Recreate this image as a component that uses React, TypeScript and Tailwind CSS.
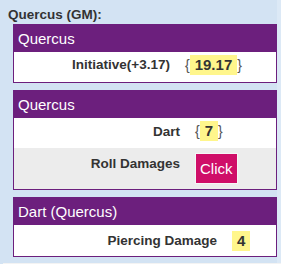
import React from "react"

const font = { fontFamily: '"Liberation Sans", Arial, sans-serif' }

function Card({ title, children }: { title: string; children: React.ReactNode }) {
  return (
    <div className="ml-[13px] w-[264px] border border-[#6c1f7d] bg-white">
      <div className="h-[27px] bg-[#6c1f7d] pl-[4px] text-[15px] leading-[27px] text-white">{title}</div>
      {children}
    </div>
  )
}

function Val({ v }: { v: string }) {
  return (
    <span className="bg-[#fff68c] px-[5px] text-[15px] font-bold leading-[20px] text-[#333]">{v}</span>
  )
}

function Brace({ children }: { children: string }) {
  return <span className="text-[14px] font-normal leading-[20px] text-[#555]">{children}</span>
}

export default function App() {
  return (
    <div className="h-[264px] w-[281px] overflow-hidden bg-[#dce9f6]" style={font}>
      <div className="h-full w-[277px] bg-[#d3e3f3] pt-[7px]">
        <div className="pl-[8px] text-[13.5px] font-bold leading-[16px] text-[#333]">Quercus (GM):</div>

        <div className="mt-[1px]">
          <Card title="Quercus">
            <div className="flex h-[30px] items-start pt-[3px]">
              <div className="flex-1 pr-[15px] text-right text-[13.5px] font-bold leading-[20px] text-[#333]">
                Initiative(+3.17)
              </div>
              <div className="flex w-[91px] items-start">
                <Brace>{"{"}</Brace>
                <Val v="19.17" />
                <Brace>{"}"}</Brace>
              </div>
            </div>
          </Card>
        </div>

        <div className="mt-[7px]">
          <Card title="Quercus">
            <div className="flex h-[30px] items-start pt-[3px]">
              <div className="flex-1 pr-[15px] pt-[1px] text-right text-[13.5px] font-bold leading-[20px] text-[#333]">
                Dart
              </div>
              <div className="flex w-[81px] items-start">
                <Brace>{"{"}</Brace>
                <Val v="7" />
                <Brace>{"}"}</Brace>
              </div>
            </div>
            <div className="flex h-[41px] items-start bg-[#ececec] pt-[5px]">
              <div className="flex-1 pr-[15px] pt-[1px] text-right text-[13.5px] font-bold leading-[20px] text-[#333]">
                Roll Damages
              </div>
              <div className="w-[81px]">
                <button className="h-[31px] border border-[#f6f6f6] bg-[#cf0e68] px-[4px] text-[15px] leading-[29px] text-white">
                  Click
                </button>
              </div>
            </div>
          </Card>
        </div>

        <div className="mt-[7px]">
          <Card title="Dart (Quercus)">
            <div className="flex h-[31px] items-start pt-[6px]">
              <div className="flex-1 pr-[15px] text-right text-[13.5px] font-bold leading-[20px] text-[#333]">
                Piercing Damage
              </div>
              <div className="flex w-[44px] items-start">
                <Val v="4" />
              </div>
            </div>
          </Card>
        </div>

        <div className="ml-[3px] mt-[6px] h-[4px] w-[278px] bg-[#f3f3f3]" />
      </div>
    </div>
  )
}
